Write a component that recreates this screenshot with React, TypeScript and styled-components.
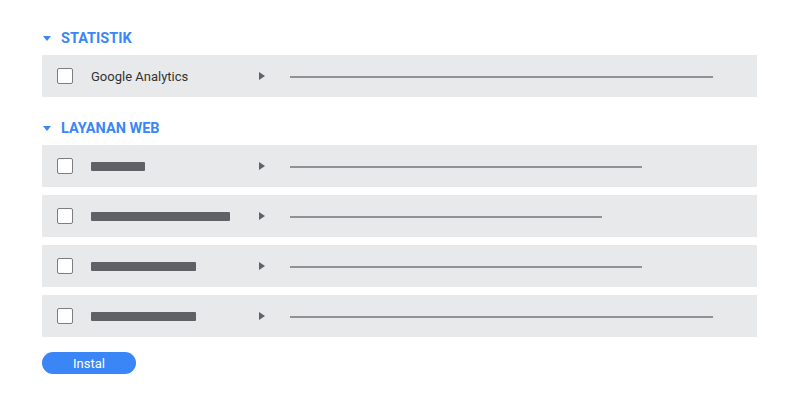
import React from 'react';
import styled, { createGlobalStyle } from 'styled-components';

const GlobalStyle = createGlobalStyle`
  body {
    margin: 0;
    background: #fff;
    font-family: Roboto, "Liberation Sans", Arial, sans-serif;
  }
`;

interface Item {
  name?: string;
  barWidth?: number;
  lineWidth: number;
}

interface Section {
  title: string;
  items: Item[];
}

const sections: Section[] = [
  {
    title: 'STATISTIK',
    items: [{ name: 'Google Analytics', lineWidth: 423 }],
  },
  {
    title: 'LAYANAN WEB',
    items: [
      { barWidth: 54, lineWidth: 352 },
      { barWidth: 139, lineWidth: 312 },
      { barWidth: 105, lineWidth: 352 },
      { barWidth: 105, lineWidth: 423 },
    ],
  },
];

export default function App() {
  return (
    <>
      <GlobalStyle />
      <Page>
        {sections.map((section) => (
          <SectionBox key={section.title}>
            <SectionHeader>
              <Caret />
              <SectionTitle>{section.title}</SectionTitle>
            </SectionHeader>
            <RowList>
              {section.items.map((item, i) => (
                <Row key={i}>
                  <Checkbox />
                  <NameCell>
                    {item.name ? (
                      <Name>{item.name}</Name>
                    ) : (
                      <NameBar style={{ width: item.barWidth }} />
                    )}
                  </NameCell>
                  <Arrow />
                  <DetailLine style={{ width: item.lineWidth }} />
                </Row>
              ))}
            </RowList>
          </SectionBox>
        ))}
        <InstallButton>Instal</InstallButton>
      </Page>
    </>
  );
}

const Page = styled.div`
  width: 715px;
  padding: 27px 0 0 42px;
  display: flex;
  flex-direction: column;
`;

const SectionBox = styled.section`
  margin-bottom: 20px;
`;

const SectionHeader = styled.div`
  height: 17px;
  padding-top: 3px;
  display: flex;
  align-items: center;
  margin-bottom: 8px;
`;

const Caret = styled.span`
  width: 0;
  height: 0;
  margin-left: 1px;
  margin-right: 10px;
  border-left: 4px solid transparent;
  border-right: 4px solid transparent;
  border-top: 5px solid #3a86f5;
`;

const SectionTitle = styled.h2`
  margin: 0;
  font-size: 14.5px;
  line-height: 17px;
  font-weight: 700;
  color: #3a86f5;
`;

const RowList = styled.div`
  display: flex;
  flex-direction: column;
  gap: 8px;
`;

const Row = styled.div`
  height: 42px;
  background: #e8e9eb;
  display: flex;
  align-items: center;
  padding-left: 15px;
`;

const Checkbox = styled.span`
  width: 16px;
  height: 16px;
  box-sizing: border-box;
  border: 1.5px solid #7a7d81;
  border-radius: 2px;
  background: #fff;
  margin-right: 18px;
  flex-shrink: 0;
`;

const NameCell = styled.div`
  width: 168px;
  display: flex;
  align-items: center;
`;

const Name = styled.span`
  font-size: 13px;
  color: #333;
`;

const NameBar = styled.span`
  height: 9px;
  background: #5f6167;
  border-radius: 1px;
`;

const Arrow = styled.span`
  width: 0;
  height: 0;
  border-top: 4px solid transparent;
  border-bottom: 4px solid transparent;
  border-left: 6px solid #5f6167;
  margin-right: 25px;
`;

const DetailLine = styled.span`
  height: 2px;
  background: #909296;
  margin-top: 2px;
`;

const InstallButton = styled.button`
  margin-top: -5px;
  width: 94px;
  height: 22px;
  border: none;
  border-radius: 11px;
  background: #3b86f7;
  color: #fff;
  font-family: Roboto, "Liberation Sans", Arial, sans-serif;
  font-size: 13px;
  padding: 0;
`;
